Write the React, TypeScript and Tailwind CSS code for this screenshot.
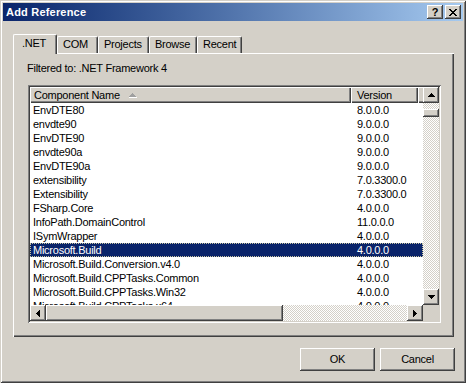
import React from "react";

const rows: [string, string][] = [
  ["EnvDTE80", "8.0.0.0"],
  ["envdte90", "9.0.0.0"],
  ["EnvDTE90", "9.0.0.0"],
  ["envdte90a", "9.0.0.0"],
  ["EnvDTE90a", "9.0.0.0"],
  ["extensibility", "7.0.3300.0"],
  ["Extensibility", "7.0.3300.0"],
  ["FSharp.Core", "4.0.0.0"],
  ["InfoPath.DomainControl", "11.0.0.0"],
  ["ISymWrapper", "4.0.0.0"],
  ["Microsoft.Build", "4.0.0.0"],
  ["Microsoft.Build.Conversion.v4.0", "4.0.0.0"],
  ["Microsoft.Build.CPPTasks.Common", "4.0.0.0"],
  ["Microsoft.Build.CPPTasks.Win32", "4.0.0.0"],
  ["Microsoft.Build.CPPTasks.x64", "4.0.0.0"],
];

const raised =
  "bg-[#d4d0c8] shadow-[inset_-1px_-1px_#404040,inset_1px_1px_#ffffff,inset_-2px_-2px_#808080,inset_2px_2px_#d4d0c8]";
const track =
  "bg-[image:repeating-conic-gradient(#ffffff_0_25%,#d4d0c8_0_50%)] bg-[length:2px_2px]";

function Arrow({ dir }: { dir: "up" | "down" | "left" | "right" }) {
  if (dir === "up" || dir === "down") {
    const d =
      dir === "up"
        ? "M3 0h1v1h-1zM2 1h3v1h-3zM1 2h5v1h-5zM0 3h7v1h-7z"
        : "M0 0h7v1h-7zM1 1h5v1h-5zM2 2h3v1h-3zM3 3h1v1h-1z";
    return (
      <svg width="7" height="4" viewBox="0 0 7 4" shapeRendering="crispEdges">
        <path d={d} fill="#000" />
      </svg>
    );
  }
  const d =
    dir === "left"
      ? "M0 3h1v1h-1zM1 2h1v3h-1zM2 1h1v5h-1zM3 0h1v7h-1z"
      : "M0 0h1v7h-1zM1 1h1v5h-1zM2 2h1v3h-1zM3 3h1v1h-1z";
  return (
    <svg width="4" height="7" viewBox="0 0 4 7" shapeRendering="crispEdges">
      <path d={d} fill="#000" />
    </svg>
  );
}

function ScrollBtn({ dir }: { dir: "up" | "down" | "left" | "right" }) {
  return (
    <div className={`w-[16px] h-[16px] shrink-0 flex items-center justify-center ${raised}`}>
      <Arrow dir={dir} />
    </div>
  );
}

function Tab({ label, w, selected }: { label: string; w: string; selected?: boolean }) {
  if (selected) {
    return (
      <div
        className={`${w} h-[20px] -mb-[1px] relative z-10 bg-[#d4d0c8] border-t border-l border-white border-r border-r-[#404040] rounded-t-[2px] shadow-[inset_-1px_0_#808080] pt-[2px] pl-[8px] leading-[13px]`}
      >
        {label}
      </div>
    );
  }
  return (
    <div
      className={`${w} h-[17px] bg-[#d4d0c8] border-t border-l border-white border-r border-r-[#404040] rounded-t-[2px] shadow-[inset_-1px_0_#808080] pt-[1px] pl-[5px] leading-[13px]`}
    >
      {label}
    </div>
  );
}

export default function App() {
  return (
    <div className="w-[472px] h-[383px] bg-white font-['Liberation_Sans',Arial,sans-serif] text-[11px] tracking-[-0.25px] text-black">
      <div className="w-[466px] h-[383px] bg-[#d4d0c8] p-[3px] flex flex-col shadow-[inset_1px_1px_#d4d0c8,inset_-1px_-1px_#404040,inset_2px_2px_#ffffff,inset_-2px_-2px_#808080]">
        {/* Title bar */}
        <div className="h-[18px] shrink-0 flex items-center pl-[3px] pr-[2px] bg-linear-to-r from-[#0a246a] to-[#a6caf0]">
          <span className="flex-1 font-bold text-white tracking-[0.2px] leading-[18px]">Add Reference</span>
          <div className="flex gap-[2px]">
            <div className={`w-[16px] h-[14px] flex items-center justify-center font-bold text-[11px] leading-none ${raised}`}>
              ?
            </div>
            <div className={`w-[16px] h-[14px] flex items-center justify-center ${raised}`}>
              <svg width="8" height="7" viewBox="0 0 8 7" shapeRendering="crispEdges">
                <path
                  d="M0 0h2v1h-2zM6 0h2v1h-2zM1 1h2v1h-2zM5 1h2v1h-2zM2 2h4v1h-4zM3 3h2v1h-2zM2 4h4v1h-4zM1 5h2v1h-2zM5 5h2v1h-2zM0 6h2v1h-2zM6 6h2v1h-2z"
                  fill="#000"
                />
              </svg>
            </div>
          </div>
        </div>

        {/* Tabs */}
        <div className="h-[32px] shrink-0 flex items-end ml-[10px] pt-[13px]">
          <Tab label=".NET" w="w-[44px]" selected />
          <Tab label="COM" w="w-[41px]" />
          <Tab label="Projects" w="w-[51px]" />
          <Tab label="Browse" w="w-[48px]" />
          <Tab label="Recent" w="w-[45px]" />
        </div>

        {/* Tab page */}
        <div className="ml-[10px] w-[441px] h-[284px] shrink-0 pt-[9px] pl-[14px] flex flex-col shadow-[inset_1px_1px_#ffffff,inset_-1px_-1px_#404040,inset_-2px_-2px_#808080]">
          <div className="leading-[13px]">Filtered to: .NET Framework 4</div>

          {/* List view */}
          <div className="mt-[10px] ml-[1px] w-[413px] h-[238px] p-[2px] bg-white flex shadow-[inset_1px_1px_#808080,inset_-1px_-1px_#ffffff,inset_2px_2px_#404040,inset_-2px_-2px_#d4d0c8]">
            <div className="w-[393px] flex flex-col">
              {/* Header */}
              <div className="h-[16px] flex leading-[16px]">
                <div className="w-[321px] pl-[4px] flex items-center gap-[8px] bg-[#d4d0c8] shadow-[inset_1px_1px_#ffffff,inset_-1px_-1px_#404040,inset_-2px_-2px_#808080]">
                  <span>Component Name</span>
                  <svg width="9" height="5" viewBox="0 0 9 5" shapeRendering="crispEdges">
                    <path d="M4 0h1v1h-1zM3 1h3v1h-3zM2 2h5v1h-5zM1 3h7v1h-7z" fill="#a0a0a0" />
                    <path d="M1 4h8v1h-8z" fill="#ffffff" />
                  </svg>
                </div>
                <div className="w-[67px] pl-[6px] bg-[#d4d0c8] shadow-[inset_1px_1px_#ffffff,inset_-1px_-1px_#404040,inset_-2px_-2px_#808080]">
                  Version
                </div>
                <div className="w-[5px] bg-[#d4d0c8] shadow-[inset_1px_1px_#ffffff,inset_0_-1px_#404040,inset_0_-2px_#808080]" />
              </div>

              {/* Rows */}
              <div className="h-[202px] overflow-hidden bg-white">
                {rows.map(([name, ver]) => {
                  const sel = name === "Microsoft.Build";
                  return (
                    <div
                      key={name}
                      className={
                        sel
                          ? "h-[14px] flex leading-[14px] bg-[#0a246a] text-white outline-1 outline-dotted outline-[#c8c4a0] -outline-offset-1"
                          : "h-[14px] flex leading-[14px]"
                      }
                    >
                      <div className="w-[321px] pl-[3px] whitespace-nowrap overflow-hidden">{name}</div>
                      <div className="w-[72px] pl-[6px] whitespace-nowrap overflow-hidden">{ver}</div>
                    </div>
                  );
                })}
              </div>

              {/* Horizontal scrollbar */}
              <div className="h-[16px] flex">
                <ScrollBtn dir="left" />
                <div className={`w-[237px] h-[16px] ${raised}`} />
                <div className={`flex-1 ${track}`} />
                <ScrollBtn dir="right" />
              </div>
            </div>

            {/* Vertical scrollbar */}
            <div className="w-[16px] flex flex-col">
              <ScrollBtn dir="up" />
              <div className={`h-[6px] ${track}`} />
              <div className={`h-[8px] ${raised}`} />
              <div className={`flex-1 ${track}`} />
              <ScrollBtn dir="down" />
              <div className="h-[16px] bg-[#d4d0c8]" />
            </div>
          </div>
        </div>

        {/* Buttons */}
        <div className="mt-[11px] flex justify-end gap-[5px] pr-[8px]">
          <div className={`w-[75px] h-[23px] flex items-center justify-center ${raised}`}>OK</div>
          <div className={`w-[75px] h-[23px] flex items-center justify-center ${raised}`}>Cancel</div>
        </div>
      </div>
    </div>
  );
}
